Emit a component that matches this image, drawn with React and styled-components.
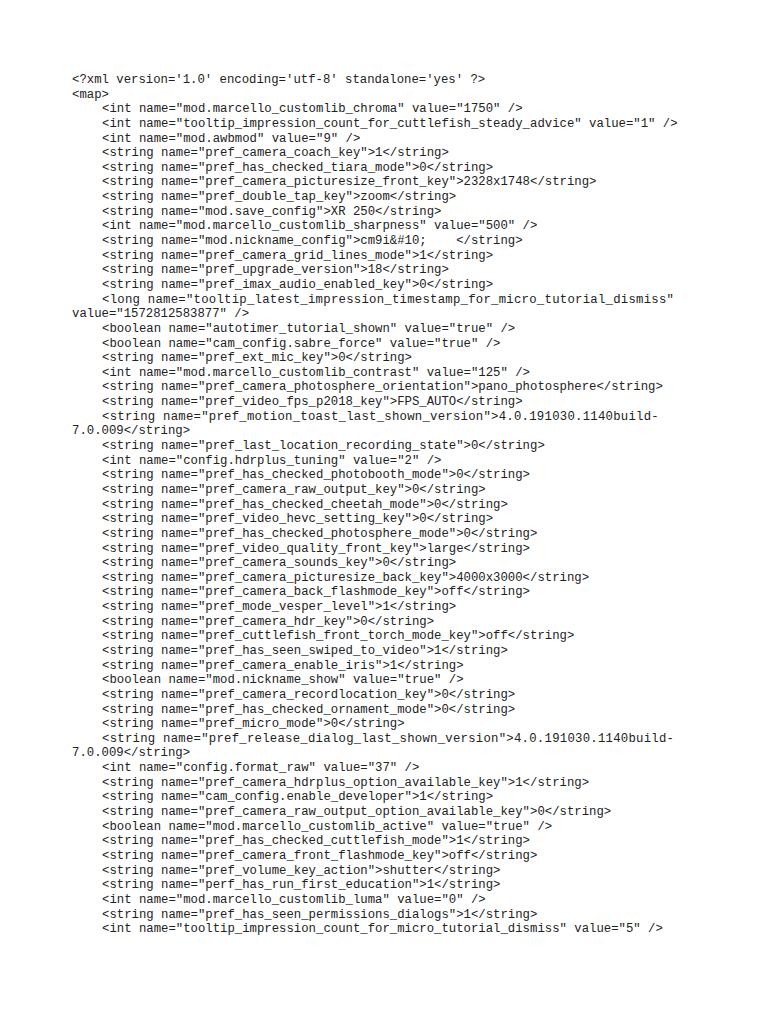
import React from 'react'
import styled, { createGlobalStyle } from 'styled-components'

// [indent, text, wrapped] — wrapped lines are set a little looser, like the justified source
const lines = [
  [0, `<?xml version='1.0' encoding='utf-8' standalone='yes' ?>`],
  [0, `<map>`],
  [1, `<int name="mod.marcello_customlib_chroma" value="1750" />`],
  [1, `<int name="tooltip_impression_count_for_cuttlefish_steady_advice" value="1" />`],
  [1, `<int name="mod.awbmod" value="9" />`],
  [1, `<string name="pref_camera_coach_key">1</string>`],
  [1, `<string name="pref_has_checked_tiara_mode">0</string>`],
  [1, `<string name="pref_camera_picturesize_front_key">2328x1748</string>`],
  [1, `<string name="pref_double_tap_key">zoom</string>`],
  [1, `<string name="mod.save_config">XR 250</string>`],
  [1, `<int name="mod.marcello_customlib_sharpness" value="500" />`],
  [1, `<string name="mod.nickname_config">cm9i&#10;    </string>`],
  [1, `<string name="pref_camera_grid_lines_mode">1</string>`],
  [1, `<string name="pref_upgrade_version">18</string>`],
  [1, `<string name="pref_imax_audio_enabled_key">0</string>`],
  [1, `<long name="tooltip_latest_impression_timestamp_for_micro_tutorial_dismiss"`, true],
  [0, `value="1572812583877" />`],
  [1, `<boolean name="autotimer_tutorial_shown" value="true" />`],
  [1, `<boolean name="cam_config.sabre_force" value="true" />`],
  [1, `<string name="pref_ext_mic_key">0</string>`],
  [1, `<int name="mod.marcello_customlib_contrast" value="125" />`],
  [1, `<string name="pref_camera_photosphere_orientation">pano_photosphere</string>`],
  [1, `<string name="pref_video_fps_p2018_key">FPS_AUTO</string>`],
  [1, `<string name="pref_motion_toast_last_shown_version">4.0.191030.1140build-`, true],
  [0, `7.0.009</string>`],
  [1, `<string name="pref_last_location_recording_state">0</string>`],
  [1, `<int name="config.hdrplus_tuning" value="2" />`],
  [1, `<string name="pref_has_checked_photobooth_mode">0</string>`],
  [1, `<string name="pref_camera_raw_output_key">0</string>`],
  [1, `<string name="pref_has_checked_cheetah_mode">0</string>`],
  [1, `<string name="pref_video_hevc_setting_key">0</string>`],
  [1, `<string name="pref_has_checked_photosphere_mode">0</string>`],
  [1, `<string name="pref_video_quality_front_key">large</string>`],
  [1, `<string name="pref_camera_sounds_key">0</string>`],
  [1, `<string name="pref_camera_picturesize_back_key">4000x3000</string>`],
  [1, `<string name="pref_camera_back_flashmode_key">off</string>`],
  [1, `<string name="pref_mode_vesper_level">1</string>`],
  [1, `<string name="pref_camera_hdr_key">0</string>`],
  [1, `<string name="pref_cuttlefish_front_torch_mode_key">off</string>`],
  [1, `<string name="pref_has_seen_swiped_to_video">1</string>`],
  [1, `<string name="pref_camera_enable_iris">1</string>`],
  [1, `<boolean name="mod.nickname_show" value="true" />`],
  [1, `<string name="pref_camera_recordlocation_key">0</string>`],
  [1, `<string name="pref_has_checked_ornament_mode">0</string>`],
  [1, `<string name="pref_micro_mode">0</string>`],
  [1, `<string name="pref_release_dialog_last_shown_version">4.0.191030.1140build-`, true],
  [0, `7.0.009</string>`],
  [1, `<int name="config.format_raw" value="37" />`],
  [1, `<string name="pref_camera_hdrplus_option_available_key">1</string>`],
  [1, `<string name="cam_config.enable_developer">1</string>`],
  [1, `<string name="pref_camera_raw_output_option_available_key">0</string>`],
  [1, `<boolean name="mod.marcello_customlib_active" value="true" />`],
  [1, `<string name="pref_has_checked_cuttlefish_mode">1</string>`],
  [1, `<string name="pref_camera_front_flashmode_key">off</string>`],
  [1, `<string name="pref_volume_key_action">shutter</string>`],
  [1, `<string name="perf_has_run_first_education">1</string>`],
  [1, `<int name="mod.marcello_customlib_luma" value="0" />`],
  [1, `<string name="pref_has_seen_permissions_dialogs">1</string>`],
  [1, `<int name="tooltip_impression_count_for_micro_tutorial_dismiss" value="5" />`]
]

const App = () => (
  <>
    <GlobalStyle />
    <Page>
      <Doc>
        {lines.map(([indent, text, wrapped], i) => (
          <Line key={i} $indent={indent} $wrapped={wrapped}>{text}</Line>
        ))}
      </Doc>
    </Page>
  </>
)

export default App

const GlobalStyle = createGlobalStyle`
  html, body {
    margin: 0;
    padding: 0;
    background: #ffffff;
  }
`

const Page = styled.div`
  width: 768px;
  min-height: 1024px;
  background: #ffffff;
  box-sizing: border-box;
  padding: 73px 0 0 72px;
`

const Doc = styled.div`
  width: 640px;
  font-family: 'Liberation Mono', 'DejaVu Sans Mono', monospace;
  font-size: 12.3px;
  line-height: 14.64px;
  color: #222222;
`

const Line = styled.div`
  white-space: pre;
  padding-left: ${({ $indent }) => $indent * 30}px;
  letter-spacing: ${({ $wrapped }) => ($wrapped ? '0.25px' : '0')};
`
